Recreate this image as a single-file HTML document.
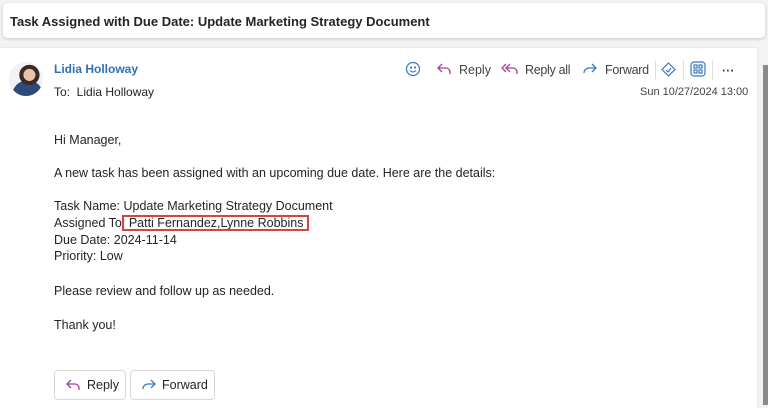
<!DOCTYPE html>
<html><head><style>
body{margin:0;width:768px;height:402px;background:#f3f3f3;font-family:"Liberation Sans",sans-serif;position:relative;overflow:hidden;color:#242424}
.hdr{position:absolute;left:3px;top:3px;width:762px;height:35px;background:#fff;border-radius:4px;box-shadow:0 1px 3px rgba(0,0,0,.18)}
.hdr span{position:absolute;left:7px;top:11px;font-size:13px;font-weight:bold;color:#242424}
.card{position:absolute;left:0;top:48px;width:757px;height:360px;background:#fff;box-shadow:0 0 2px rgba(0,0,0,.1)}
.sb{position:absolute;left:763px;top:65px;width:5px;height:340px;background:#8a8a8a}
.av{position:absolute;left:9px;top:62px;width:34px;height:34px;border-radius:50%;background:radial-gradient(circle at 60% 38%,#e9c4a8 0 20%,#3a2a25 21% 34%,transparent 35%),radial-gradient(circle at 55% 100%,#2c4a7a 0 40%,#f2f2f2 41%)}
.t{position:absolute;font-size:12.5px;white-space:nowrap}
.btn{position:absolute;top:370px;height:28px;border:1px solid #d8d8d8;border-radius:4px;background:#fff;font-size:12.5px}
</style></head><body>
<div class="hdr"><span>Task Assigned with Due Date: Update Marketing Strategy Document</span></div>
<div class="card"></div>
<div class="sb"></div>
<div class="av"></div>
<div class="t" style="left:54px;top:62px;color:#2f6fb3;font-weight:bold;font-size:12px">Lidia Holloway</div>
<div class="t" style="left:54px;top:85px;font-size:12px">To:&nbsp; Lidia Holloway</div>
<svg style="position:absolute;left:405px;top:61px" width="16" height="16" viewBox="0 0 16 16" fill="none" stroke="#3a78c3" stroke-width="1.2"><circle cx="8" cy="8" r="6.5"/><circle cx="6" cy="6.5" r=".5"/><circle cx="10" cy="6.5" r=".5"/><path d="M5 9.5q3 3 6 0"/></svg>
<svg style="position:absolute;left:436px;top:62px" width="16" height="14" viewBox="0 0 16 14" fill="none" stroke="#a0459a" stroke-width="1.3"><path d="M6 2 2 6l4 4M2 6h8a4 4 0 0 1 4 4v2"/></svg>
<div class="t" style="left:459px;top:63px;color:#424242">Reply</div>
<svg style="position:absolute;left:501px;top:62px" width="18" height="14" viewBox="0 0 18 14" fill="none" stroke="#a0459a" stroke-width="1.3"><path d="M5 2 1 6l4 4M9 2 5 6l4 4M5 6h7a4 4 0 0 1 4 4v2"/></svg>
<div class="t" style="left:525px;top:63px;color:#424242;letter-spacing:-0.3px">Reply all</div>
<svg style="position:absolute;left:582px;top:62px" width="16" height="14" viewBox="0 0 16 14" fill="none" stroke="#3a78c3" stroke-width="1.3"><path d="M10 2l4 4-4 4M14 6H7a5 5 0 0 0-5 5"/></svg>
<div class="t" style="left:605px;top:63px;color:#424242;letter-spacing:-0.3px">Forward</div>
<div style="position:absolute;left:655px;top:60px;width:1px;height:20px;background:#e0e0e0"></div>
<svg style="position:absolute;left:661px;top:62px" width="15" height="15" viewBox="0 0 15 15" fill="none" stroke="#3a78c3" stroke-width="1.2"><path d="M7.5 1 14 7.5 7.5 14 1 7.5z"/><path d="M5 8l2 2 3-4"/></svg>
<div style="position:absolute;left:683px;top:60px;width:1px;height:20px;background:#e0e0e0"></div>
<svg style="position:absolute;left:690px;top:61px" width="16" height="16" viewBox="0 0 16 16" fill="none" stroke="#3a78c3" stroke-width="1.2"><rect x="1" y="1" width="14" height="14" rx="3"/><rect x="4" y="4" width="3" height="3"/><rect x="9" y="4" width="3" height="3"/><rect x="4" y="9" width="3" height="3"/><rect x="9" y="9" width="3" height="3"/></svg>
<div style="position:absolute;left:712px;top:60px;width:1px;height:20px;background:#e0e0e0"></div>
<div class="t" style="left:722px;top:64px;font-weight:bold;color:#424242">···</div>
<div class="t" style="left:640px;top:86px;font-size:11px;color:#424242">Sun 10/27/2024 13:00</div>
<div class="t" style="left:54px;top:133px">Hi Manager,</div>
<div class="t" style="left:54px;top:166px">A new task has been assigned with an upcoming due date. Here are the details:</div>
<div class="t" style="left:54px;top:199px">Task Name: Update Marketing Strategy Document</div>
<div class="t" style="left:54px;top:216px">Assigned To: Patti Fernandez,Lynne Robbins</div>
<div style="position:absolute;left:122px;top:215px;width:187px;height:16px;border:2px solid #d9433e;box-sizing:border-box"></div>
<div class="t" style="left:54px;top:233px">Due Date: 2024-11-14</div>
<div class="t" style="left:54px;top:249px">Priority: Low</div>
<div class="t" style="left:54px;top:284px">Please review and follow up as needed.</div>
<div class="t" style="left:54px;top:318px">Thank you!</div>
<div class="btn" style="left:54px;width:70px"><svg style="position:absolute;left:10px;top:7px" width="16" height="14" viewBox="0 0 16 14" fill="none" stroke="#a0459a" stroke-width="1.3"><path d="M6 2 2 6l4 4M2 6h8a4 4 0 0 1 4 4v2"/></svg><span style="position:absolute;left:32px;top:7px">Reply</span></div>
<div class="btn" style="left:130px;width:83px"><svg style="position:absolute;left:10px;top:7px" width="16" height="14" viewBox="0 0 16 14" fill="none" stroke="#3a78c3" stroke-width="1.3"><path d="M10 2l4 4-4 4M14 6H7a5 5 0 0 0-5 5"/></svg><span style="position:absolute;left:31px;top:7px">Forward</span></div>
</body></html>
